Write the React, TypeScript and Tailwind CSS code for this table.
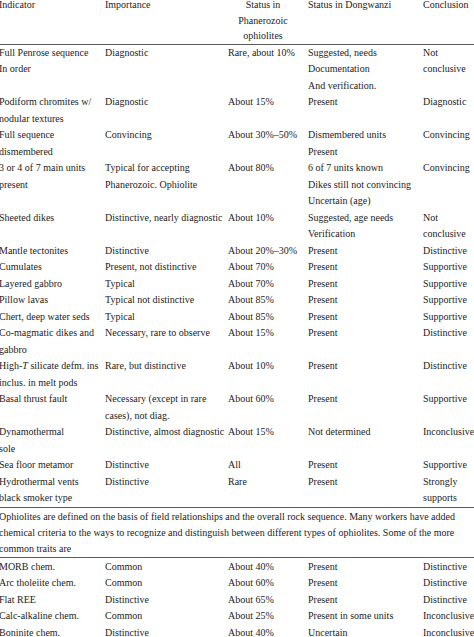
import React from "react";

type Cell = React.ReactNode[];
type RowData = [Cell, Cell, Cell, Cell, Cell];

const body: RowData[] = [
  [["Full Penrose sequence", "In order"], ["Diagnostic"], ["Rare, about 10%"], ["Suggested, needs", "Documentation", "And verification."], ["Not", "conclusive"]],
  [["Podiform chromites w/", "nodular textures"], ["Diagnostic"], ["About 15%"], ["Present"], ["Diagnostic"]],
  [["Full sequence", "dismembered"], ["Convincing"], ["About 30%–50%"], ["Dismembered units", "Present"], ["Convincing"]],
  [["3 or 4 of 7 main units", "present"], ["Typical for accepting", "Phanerozoic. Ophiolite"], ["About 80%"], ["6 of 7 units known", "Dikes still not convincing", "Uncertain (age)"], ["Convincing"]],
  [["Sheeted dikes"], ["Distinctive, nearly diagnostic"], ["About 10%"], ["Suggested, age needs", "Verification"], ["Not", "conclusive"]],
  [["Mantle tectonites"], ["Distinctive"], ["About 20%–30%"], ["Present"], ["Distinctive"]],
  [["Cumulates"], ["Present, not distinctive"], ["About 70%"], ["Present"], ["Supportive"]],
  [["Layered gabbro"], ["Typical"], ["About 70%"], ["Present"], ["Supportive"]],
  [["Pillow lavas"], ["Typical not distinctive"], ["About 85%"], ["Present"], ["Supportive"]],
  [["Chert, deep water seds"], ["Typical"], ["About 85%"], ["Present"], ["Supportive"]],
  [["Co-magmatic dikes and", "gabbro"], ["Necessary, rare to observe"], ["About 15%"], ["Present"], ["Distinctive"]],
  [[<>High-<i>T</i> silicate defm. ins</>, "inclus. in melt pods"], ["Rare, but distinctive"], ["About 10%"], ["Present"], ["Distinctive"]],
  [["Basal thrust fault"], ["Necessary (except in rare", "cases), not diag."], ["About 60%"], ["Present"], ["Supportive"]],
  [["Dynamothermal", "sole"], ["Distinctive, almost diagnostic"], ["About 15%"], ["Not determined"], ["Inconclusive"]],
  [["Sea floor metamor"], ["Distinctive"], ["All"], ["Present"], ["Supportive"]],
  [["Hydrothermal vents", "black smoker type"], ["Distinctive"], ["Rare"], ["Present"], ["Strongly", "supports"]],
];

const chem: RowData[] = [
  [["MORB chem."], ["Common"], ["About 40%"], ["Present"], ["Distinctive"]],
  [["Arc tholeiite chem."], ["Common"], ["About 60%"], ["Present"], ["Distinctive"]],
  [["Flat REE"], ["Distinctive"], ["About 65%"], ["Present"], ["Distinctive"]],
  [["Calc-alkaline chem."], ["Common"], ["About 25%"], ["Present in some units"], ["Inconclusive"]],
  [["Boninite chem."], ["Distinctive"], ["About 40%"], ["Uncertain"], ["Inconclusive"]],
];

function Row({ data }: { data: RowData }) {
  return (
    <div className="grid grid-cols-[106px_123px_80px_115px_1fr] leading-[16.5px]">
      {data.map((cell, i) => (
        <div key={i} className="flex flex-col whitespace-nowrap">
          {cell.map((line, j) => (
            <span key={j}>{line}</span>
          ))}
        </div>
      ))}
    </div>
  );
}

function Rule() {
  return <div className="h-px bg-[#5a5a5a]" />;
}

export default function App() {
  return (
    <div className="w-[474px] h-[637px] overflow-hidden bg-white text-[#1c1c1c] text-[10px] font-['Liberation_Serif','Times_New_Roman',serif]">
      <div className="mt-[-3px] ml-[-1px]">
        <div className="grid grid-cols-[106px_123px_80px_115px_1fr] leading-[15.5px] whitespace-nowrap">
          <div>Indicator</div>
          <div>Importance</div>
          <div className="flex flex-col items-center pr-[10px]">
            <span>Status in</span>
            <span>Phanerozoic</span>
            <span>ophiolites</span>
          </div>
          <div>Status in Dongwanzi</div>
          <div>Conclusion</div>
        </div>
      </div>
      <Rule />
      <div className="ml-[-1px] flex flex-col">
        {body.map((r, i) => (
          <Row key={i} data={r} />
        ))}
      </div>
      <Rule />
      <div className="ml-[-1px] pt-[1px] leading-[16px] whitespace-nowrap">
        <div>Ophiolites are defined on the basis of field relationships and the overall rock sequence. Many workers have added</div>
        <div>chemical criteria to the ways to recognize and distinguish between different types of ophiolites. Some of the more</div>
        <div>common traits are</div>
      </div>
      <Rule />
      <div className="ml-[-1px] pt-[1px] flex flex-col">
        {chem.map((r, i) => (
          <Row key={i} data={r} />
        ))}
      </div>
    </div>
  );
}
